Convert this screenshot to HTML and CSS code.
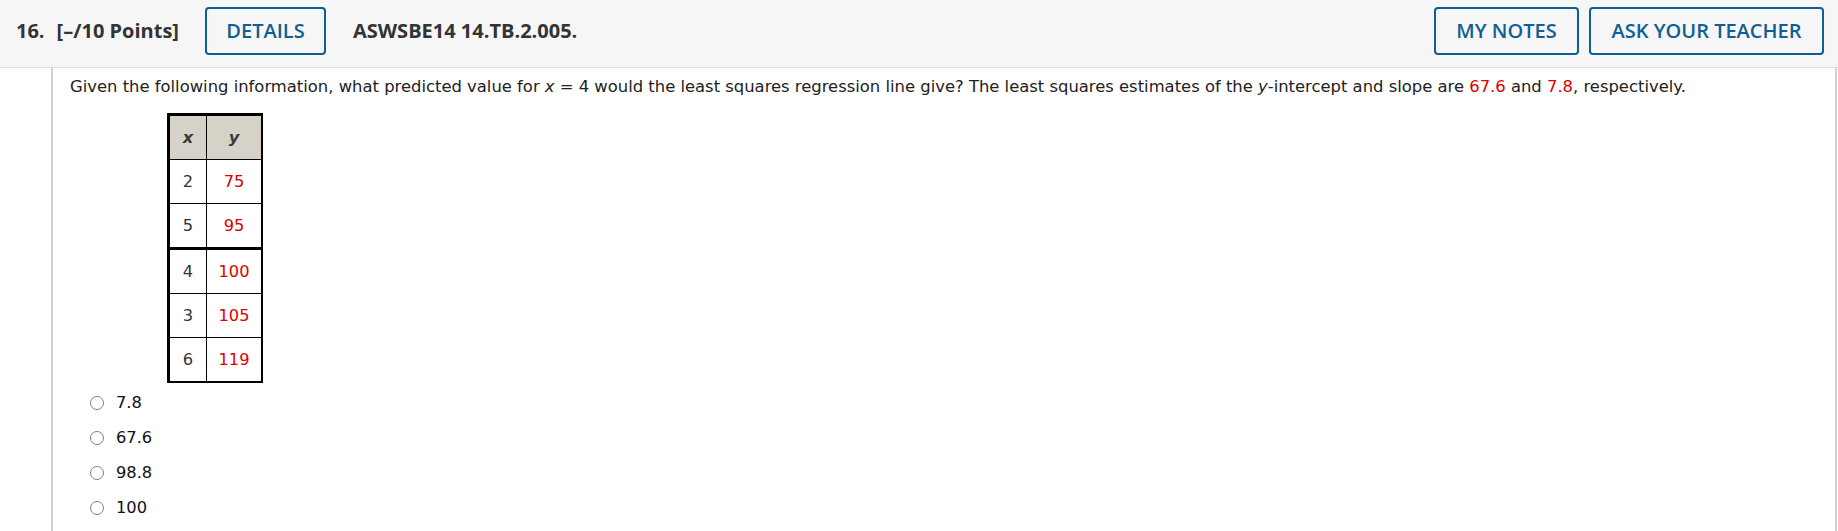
FILE: index.html
```html
<!DOCTYPE html>
<html>
<head>
<meta charset="utf-8">
<link rel="stylesheet" href="styles.css">
</head>
<body>
<div class="header">
  <div class="qnum"><span class="num">16.</span><span>[–/10 Points]</span></div>
  <button class="btn btn-details">DETAILS</button>
  <div class="qid">ASWSBE14 14.TB.2.005.</div>
  <div class="spacer"></div>
  <button class="btn btn-notes">MY NOTES</button>
  <button class="btn btn-ask">ASK YOUR TEACHER</button>
</div>
<div class="content">
  <p class="question">Given the following information, what predicted value for <i>x</i> = 4 would the least squares regression line give? The least squares estimates of the <i>y</i>-intercept and slope are <span class="red">67.6</span> and <span class="red">7.8</span>, respectively.</p>
  <table class="data">
    <tr class="head"><th>x</th><th>y</th></tr>
    <tr><td class="cx">2</td><td class="cy">75</td></tr>
    <tr class="sep"><td class="cx">5</td><td class="cy">95</td></tr>
    <tr><td class="cx">4</td><td class="cy">100</td></tr>
    <tr><td class="cx">3</td><td class="cy">105</td></tr>
    <tr><td class="cx">6</td><td class="cy">119</td></tr>
  </table>
  <ul class="answers">
    <li><span class="radio"></span><span>7.8</span></li>
    <li><span class="radio"></span><span>67.6</span></li>
    <li><span class="radio"></span><span>98.8</span></li>
    <li><span class="radio"></span><span>100</span></li>
  </ul>
</div>
</body>
</html>
```
FILE: styles.css
```css
html, body {
  margin: 0;
  padding: 0;
  background: #ffffff;
}
body {
  font-family: "DejaVu Sans", Verdana, sans-serif;
  color: #222;
  overflow: hidden;
}
.header {
  box-sizing: border-box;
  height: 68px;
  background: #f6f6f6;
  border-bottom: 1px solid #dcdcdc;
  display: flex;
  align-items: center;
  padding: 0 14px 6px 16px;
  font-family: "Open Sans", sans-serif;
  font-weight: 700;
  font-size: 20px;
  color: #333;
}
.qnum {
  display: flex;
  gap: 12px;
}
.btn {
  box-sizing: border-box;
  height: 48px;
  background: #f6f6f6;
  border: 2px solid #0e5f93;
  border-radius: 4px;
  color: #0e5f93;
  font-family: "Open Sans", sans-serif;
  font-weight: 600;
  font-size: 20px;
  padding: 0;
  cursor: pointer;
}
.btn-details {
  width: 121px;
  margin-left: 26px;
}
.qid {
  margin-left: 27px;
}
.spacer {
  flex: 1;
}
.btn-notes {
  width: 145px;
}
.btn-ask {
  width: 235px;
  margin-left: 10px;
}
.content {
  margin: 0 1px 0 51px;
  border-left: 2px solid #d2d2d2;
  border-right: 2px solid #d2d2d2;
  padding: 8px 17px 20px 17px;
  height: 600px;
}
.question {
  margin: 0;
  font-family: "DejaVu Sans", Verdana, sans-serif;
  font-size: 16.4px;
  line-height: 21px;
  color: #222;
}
.red {
  color: #e00000;
}
.data {
  margin: 16px 0 0 97px;
  border-collapse: collapse;
  border: 3px solid #000;
  border-bottom-width: 2px;
  border-right-width: 2px;
  font-size: 16.25px;
}
.data th, .data td {
  border: 1px solid #000;
  height: 43px;
  padding: 0;
  text-align: center;
}
.data th {
  background: #d6d2c7;
  font-style: italic;
  font-weight: 700;
  color: #3a3a3a;
}
.data tr.sep td {
  border-bottom: 3px solid #000;
}
.cx {
  width: 36px;
  color: #333;
}
.cy {
  width: 54px;
  color: #e00000;
}
.answers {
  list-style: none;
  margin: 2px 0 0 20px;
  padding: 0;
  font-size: 16.25px;
  color: #111;
}
.answers li {
  display: flex;
  align-items: center;
  gap: 12px;
  height: 35px;
}
.radio {
  box-sizing: border-box;
  width: 14px;
  height: 14px;
  border: 1.5px solid #808080;
  border-radius: 50%;
}
```
